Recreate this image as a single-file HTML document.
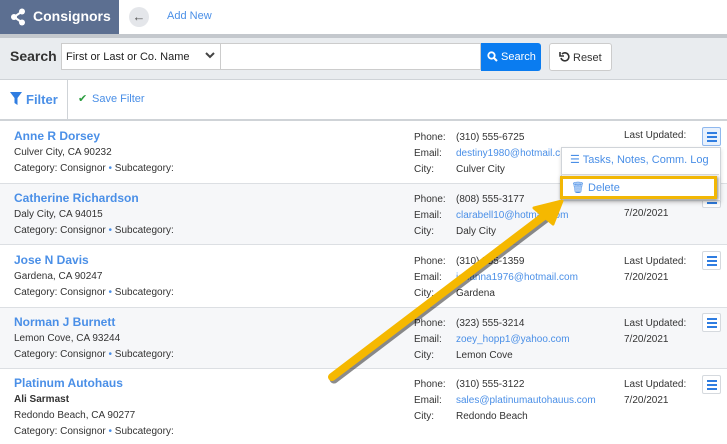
<!DOCTYPE html><html><head><style>
*{box-sizing:border-box;margin:0;padding:0}
body{width:727px;height:444px;overflow:hidden;background:#fff;font-family:"Liberation Sans",sans-serif;position:relative;color:#333}
.a{position:absolute;white-space:nowrap}
.nm{color:#4a8fe7;font-weight:bold;font-size:12px}
.s{font-size:10px;color:#333}
.l{color:#4a8fe7}
.mb{position:absolute;left:702px;width:19px;height:19px;border:1px solid #d5d9de;border-radius:2px;background:#fff}
.mb i{position:absolute;left:4px;width:10px;height:2px;background:#2f7de1}
</style></head><body>
<div class="a" style="left:0;top:0;width:119px;height:34px;background:#5c6f91"></div>
<svg class="a" style="left:10px;top:8px" width="16" height="18" viewBox="0 0 16 18"><circle cx="12" cy="3.5" r="3" fill="#fff"/><circle cx="4" cy="9" r="3" fill="#fff"/><circle cx="12" cy="14.5" r="3" fill="#fff"/><path d="M12 3.5L4 9L12 14.5" stroke="#fff" stroke-width="2" fill="none"/></svg>
<div class="a" style="left:33px;top:8px;color:#fff;font-weight:bold;font-size:14px">Consignors</div>
<div class="a" style="left:129px;top:7px;width:20px;height:20px;border-radius:10px;background:#e4e6ea;text-align:center;font-size:13px;line-height:19px;color:#555">←</div>
<div class="a" style="left:167px;top:10px;font-size:11px;color:#4a8fe7">Add New</div>
<div class="a" style="left:0;top:34px;width:727px;height:46px;background:#e9ecef;border-top:4px solid #c4c8cd;border-bottom:1px solid #cfd3d7"></div>
<div class="a" style="left:10px;top:48px;font-size:14px;font-weight:bold;color:#333">Search</div>
<div class="a" style="left:61px;top:43px;width:420px;height:27px;background:#fff;border:1px solid #ccc"></div>
<div class="a" style="left:220px;top:43px;width:1px;height:27px;background:#ccc"></div>
<div class="a" style="left:66px;top:51px;font-size:11px;color:#222">First or Last or Co. Name</div>
<svg class="a" style="left:205px;top:52px" width="10" height="7"><path d="M1 1L5 5L9 1" stroke="#444" stroke-width="2" fill="none"/></svg>
<div class="a" style="left:481px;top:43px;width:60px;height:28px;background:#0a7cf0;border-radius:0 3px 3px 0;color:#fff;font-size:11px;padding:8px 0 0 20px">Search</div>
<svg class="a" style="left:487px;top:51px" width="11" height="11"><circle cx="4.5" cy="4.5" r="3.2" stroke="#fff" stroke-width="1.8" fill="none"/><path d="M7 7L10 10" stroke="#fff" stroke-width="2"/></svg>
<div class="a" style="left:549px;top:43px;width:63px;height:28px;background:#fff;border:1px solid #ccc;border-radius:3px;font-size:11px;padding:8px 0 0 23px;color:#333">Reset</div>
<svg class="a" style="left:559px;top:51px" width="11" height="11"><path d="M3 3A4 4 0 1 1 2 7" stroke="#333" stroke-width="1.6" fill="none"/><path d="M1 1V5H5" stroke="#333" stroke-width="1.6" fill="none"/></svg>
<div class="a" style="left:0;top:119px;width:727px;height:2px;background:#cfd3d7"></div>
<div class="a" style="left:67px;top:80px;width:1px;height:39px;background:#cfd3d7"></div>
<svg class="a" style="left:10px;top:92px" width="12" height="13"><path d="M0 0H12L7.5 6V13L4.5 11V6Z" fill="#2f7de1"/></svg>
<div class="a" style="left:26px;top:92px;font-size:13px;font-weight:bold;color:#4a8fe7">Filter</div>
<div class="a" style="left:78px;top:92px;font-size:11px;color:#2a9d3f">✔</div>
<div class="a" style="left:92px;top:93px;font-size:11px;color:#4a8fe7">Save Filter</div>

<div class="a" style="left:0;top:183px;width:727px;height:62px;background:#f6f7f9;border-top:1px solid #dcdfe3;border-bottom:1px solid #dcdfe3"></div>
<div class="a" style="left:0;top:307px;width:727px;height:62px;background:#f6f7f9;border-top:1px solid #dcdfe3;border-bottom:1px solid #dcdfe3"></div>

<div class="a nm" style="left:14px;top:129px">Anne R Dorsey</div>
<div class="a s" style="left:14px;top:147px">Culver City, CA 90232</div>
<div class="a s" style="left:14px;top:163px">Category: Consignor <span class="l">•</span> Subcategory:</div>
<div class="a s" style="left:414px;top:130px;line-height:16px">Phone:<br>Email:<br>City:</div>
<div class="a s" style="left:456px;top:130px;line-height:16px">(310) 555-6725<br><span class="l">destiny1980@hotmail.c</span><br>Culver City</div>
<div class="a s" style="left:624px;top:130px">Last Updated:</div>
<div class="mb" style="top:127px;border-color:#8fb8ee;background:#e8f1fd"><i style="top:4px"></i><i style="top:8px"></i><i style="top:12px"></i></div>

<div class="a nm" style="left:14px;top:191px">Catherine Richardson</div>
<div class="a s" style="left:14px;top:209px">Daly City, CA 94015</div>
<div class="a s" style="left:14px;top:225px">Category: Consignor <span class="l">•</span> Subcategory:</div>
<div class="a s" style="left:414px;top:192px;line-height:16px">Phone:<br>Email:<br>City:</div>
<div class="a s" style="left:456px;top:192px;line-height:16px">(808) 555-3177<br><span class="l">clarabell10@hotmail.com</span><br>Daly City</div>
<div class="a s" style="left:624px;top:208px">7/20/2021</div>
<div class="mb" style="top:189px"><i style="top:4px"></i><i style="top:8px"></i><i style="top:12px"></i></div>

<div class="a nm" style="left:14px;top:253px">Jose N Davis</div>
<div class="a s" style="left:14px;top:271px">Gardena, CA 90247</div>
<div class="a s" style="left:14px;top:287px">Category: Consignor <span class="l">•</span> Subcategory:</div>
<div class="a s" style="left:414px;top:254px;line-height:16px">Phone:<br>Email:<br>City:</div>
<div class="a s" style="left:456px;top:254px;line-height:16px">(310) 555-1359<br><span class="l">johanna1976@hotmail.com</span><br>Gardena</div>
<div class="a s" style="left:624px;top:254px;line-height:16px">Last Updated:<br>7/20/2021</div>
<div class="mb" style="top:251px"><i style="top:4px"></i><i style="top:8px"></i><i style="top:12px"></i></div>

<div class="a nm" style="left:14px;top:315px">Norman J Burnett</div>
<div class="a s" style="left:14px;top:333px">Lemon Cove, CA 93244</div>
<div class="a s" style="left:14px;top:349px">Category: Consignor <span class="l">•</span> Subcategory:</div>
<div class="a s" style="left:414px;top:316px;line-height:16px">Phone:<br>Email:<br>City:</div>
<div class="a s" style="left:456px;top:316px;line-height:16px">(323) 555-3214<br><span class="l">zoey_hopp1@yahoo.com</span><br>Lemon Cove</div>
<div class="a s" style="left:624px;top:316px;line-height:16px">Last Updated:<br>7/20/2021</div>
<div class="mb" style="top:313px"><i style="top:4px"></i><i style="top:8px"></i><i style="top:12px"></i></div>

<div class="a nm" style="left:14px;top:376px">Platinum Autohaus</div>
<div class="a s" style="left:14px;top:394px;font-weight:bold">Ali Sarmast</div>
<div class="a s" style="left:14px;top:410px">Redondo Beach, CA 90277</div>
<div class="a s" style="left:14px;top:426px">Category: Consignor <span class="l">•</span> Subcategory:</div>
<div class="a s" style="left:414px;top:377px;line-height:16px">Phone:<br>Email:<br>City:</div>
<div class="a s" style="left:456px;top:377px;line-height:16px">(310) 555-3122<br><span class="l">sales@platinumautohauus.com</span><br>Redondo Beach</div>
<div class="a s" style="left:624px;top:377px;line-height:16px">Last Updated:<br>7/20/2021</div>
<div class="mb" style="top:375px"><i style="top:4px"></i><i style="top:8px"></i><i style="top:12px"></i></div>

<div class="a" style="left:561px;top:147px;width:160px;height:54px;background:#fff;border:1px solid #d0d4d9;box-shadow:0 2px 4px rgba(0,0,0,.15)"></div>
<div class="a" style="left:570px;top:153px;font-size:11px;color:#4a8fe7">☰ Tasks, Notes, Comm. Log</div>
<div class="a" style="left:561px;top:174px;width:158px;height:1px;background:#ddd"></div>
<div class="a" style="left:560px;top:176px;width:157px;height:23px;border:3px solid #f2b705;box-shadow:1px 1px 3px rgba(0,0,0,.5)"></div>
<div class="a" style="left:571px;top:181px;font-size:11px;color:#4a8fe7">🗑 Delete</div>

<svg class="a" style="left:0;top:0" width="727" height="444"><g stroke-linecap="round" stroke-linejoin="round">
<path d="M332 377L552 210" stroke="rgba(0,0,0,.45)" stroke-width="9" transform="translate(2,2)"/>
<path d="M332 377L552 210" stroke="#f5b800" stroke-width="8"/>
<path d="M562 201L534 208L553 224Z" fill="#f5b800" stroke="#f5b800" stroke-width="3"/>
</g></svg>
</body></html>
